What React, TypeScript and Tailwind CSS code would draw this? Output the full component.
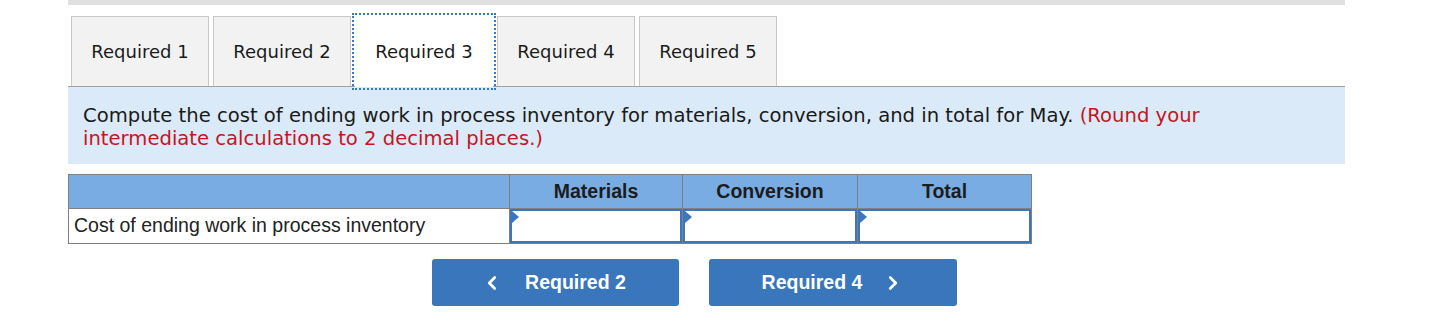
import { ChevronLeft, ChevronRight } from "lucide-react";

const tabs = ["Required 1", "Required 2", "Required 3", "Required 4", "Required 5"];
const columns = [
  { label: "Materials", width: "w-[173px]" },
  { label: "Conversion", width: "w-[175px]" },
  { label: "Total", width: "w-[174px]" },
];

function AmountInput() {
  return (
    <div className="relative h-full border-2 border-[#3b76bf] bg-white">
      <span className="absolute left-0 top-0 h-0 w-0 border-y-[6px] border-l-[7px] border-y-transparent border-l-[#3b76bf]" />
    </div>
  );
}

export default function App() {
  return (
    <div className="min-h-[325px] bg-white">
      <div className="ml-[68px] w-[1277px]">
        <div className="h-[5px] bg-[#e0e0e0]" />

        <div className="mt-[11px] flex gap-[4px] border-b border-[#a0a0a0] pl-[3px] font-['DejaVu_Sans',sans-serif] text-[18px] text-[#1a1a1a]">
          {tabs.map((tab, i) =>
            i === 2 ? (
              <div
                key={tab}
                className="relative -mb-px flex h-[71px] w-[138px] items-center justify-center bg-white outline-2 outline-offset-[1px] outline-dotted outline-[#3b78c4]"
              >
                {tab}
              </div>
            ) : (
              <div
                key={tab}
                className="flex h-[70px] w-[138px] items-center justify-center border border-b-0 border-[#c8c8c8] bg-[#f2f2f2]"
              >
                {tab}
              </div>
            )
          )}
        </div>

        <div className="bg-[#daeaf8] pb-[14px] pl-[15px] pr-[90px] pt-[17px] font-['DejaVu_Sans',sans-serif] text-[19.6px] leading-[23px] text-[#1a1a1a]">
          Compute the cost of ending work in process inventory for materials, conversion, and in total for May.{" "}
          <span className="text-[#c4161c]">(Round your intermediate calculations to 2 decimal places.)</span>
        </div>

        <table className="mt-[10px] w-[963px] table-fixed border-collapse font-['Liberation_Sans',Arial,sans-serif] text-[19.5px]">
          <thead>
            <tr className="h-[34px] bg-[#78ace3]">
              <th className="w-[441px] border border-[#808080]" />
              {columns.map((c) => (
                <th key={c.label} className={`${c.width} border border-[#808080] text-center font-bold leading-none text-[#1c1c1c]`}>
                  {c.label}
                </th>
              ))}
            </tr>
          </thead>
          <tbody>
            <tr className="h-[35px]">
              <td className="border border-[#808080] px-[5px] text-left leading-none text-[#222]">
                Cost of ending work in process inventory
              </td>
              {columns.map((c) => (
                <td key={c.label} className="h-[35px] border border-[#808080] p-0">
                  <AmountInput />
                </td>
              ))}
            </tr>
          </tbody>
        </table>

        <div className="mt-[15px] flex gap-[30px] pl-[364px] font-['Liberation_Sans',Arial,sans-serif] text-[19.5px] font-bold text-white">
          <button className="flex h-[47px] w-[247px] items-center justify-center gap-[22px] rounded-[3px] bg-[#3a76bb] pr-[4px]">
            <ChevronLeft className="h-[22px] w-[22px]" strokeWidth={3} />
            <span>Required 2</span>
          </button>
          <button className="flex h-[47px] w-[248px] items-center justify-center gap-[20px] rounded-[3px] bg-[#3a76bb]">
            <span>Required 4</span>
            <ChevronRight className="h-[22px] w-[22px]" strokeWidth={3} />
          </button>
        </div>
      </div>
    </div>
  );
}
